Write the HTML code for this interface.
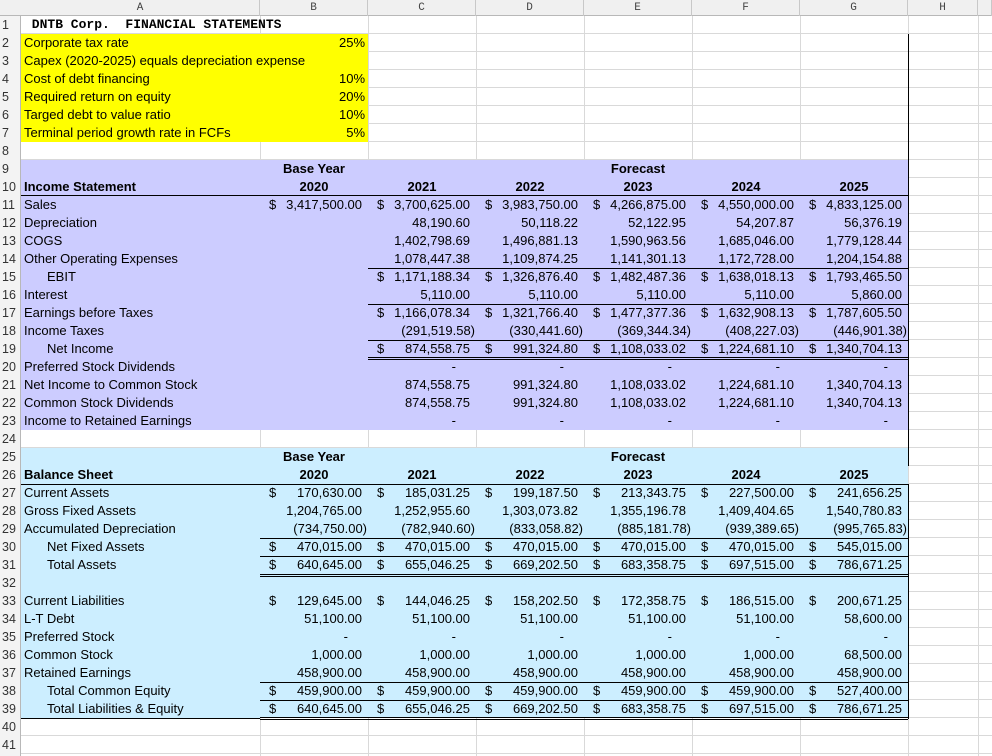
<!DOCTYPE html>
<html><head><meta charset="utf-8"><style>
*{margin:0;padding:0;box-sizing:border-box}
body{width:992px;height:756px;overflow:hidden;background:#fff;position:relative;font-family:"Liberation Sans",Arial,sans-serif;font-size:13px;color:#000}
#grid{position:absolute;left:0;top:0;width:992px;height:756px;
background-image:linear-gradient(to bottom,#d9d9d9 1px,transparent 1px);background-size:100% 18px;background-position:0 15px}
.v{position:absolute;top:0;height:756px;width:1px;background:#d9d9d9}
.f{position:absolute}
#hdr{position:absolute;left:0;top:0;width:992px;height:16px;background:#f0f0f0;border-bottom:1px solid #b8b8b8}
#hdr span{position:absolute;top:0;height:16px;line-height:16px;text-align:center;font-family:"Liberation Mono",monospace;font-size:11px;color:#444;border-right:1px solid #c8c8c8}
#rn{position:absolute;left:0;top:16px;width:21px;height:740px;background:#f3f3f3;border-right:1px solid #b8b8b8}
table{position:absolute;left:0;top:16px;border-collapse:collapse;table-layout:fixed;width:992px}
tr{height:18px}
td{height:18px;line-height:18px;padding:0;white-space:nowrap;overflow:visible;position:relative;vertical-align:middle}
td.h{font-size:12.5px;color:#333;padding-left:2px}
.l{padding-left:3px}
.i{padding-left:26px}
.bd{font-weight:bold}
.c{text-align:center;font-weight:bold}
.n{text-align:right;padding-right:6px}
.g{padding-right:1px}
.z{padding-right:20px}
.p{text-align:right;padding-right:3px}
.s{position:absolute;left:9px;top:0}
.t1{font-family:"Liberation Mono",monospace;font-weight:bold;font-size:13px;white-space:pre}
.ln{position:absolute;height:1px;background:#000}
</style></head><body>
<div id="grid"></div>
<div class="v" style="left:260px"></div><div class="v" style="left:368px"></div><div class="v" style="left:476px"></div><div class="v" style="left:584px"></div><div class="v" style="left:692px"></div><div class="v" style="left:800px"></div><div class="v" style="left:908px"></div><div class="v" style="left:978px"></div>
<div class="f" style="left:21px;top:34px;width:347px;height:108px;background:#ffff00"></div>
<div class="f" style="left:21px;top:160px;width:887px;height:270px;background:#ccccff"></div>
<div class="f" style="left:21px;top:448px;width:887px;height:270px;background:#cceeff"></div>
<div id="hdr">
<span style="left:21px;width:239px">A</span><span style="left:260px;width:108px">B</span><span style="left:368px;width:108px">C</span><span style="left:476px;width:108px">D</span><span style="left:584px;width:108px">E</span><span style="left:692px;width:108px">F</span><span style="left:800px;width:108px">G</span><span style="left:908px;width:70px">H</span><span style="left:978px;width:14px"></span>
</div>
<div id="rn"></div>
<div class="ln" style="left:908px;top:34px;width:1px;height:432px"></div>
<div class="ln" style="left:908px;top:484px;width:1px;height:235px"></div>
<div class="ln" style="left:21px;top:195px;width:887px"></div>
<div class="ln" style="left:368px;top:268px;width:540px"></div>
<div class="ln" style="left:368px;top:304px;width:540px"></div>
<div class="ln" style="left:368px;top:340px;width:540px"></div>
<div class="ln" style="left:368px;top:357px;width:540px"></div>
<div class="ln" style="left:368px;top:359px;width:540px"></div>
<div class="ln" style="left:21px;top:484px;width:887px"></div>
<div class="ln" style="left:260px;top:538px;width:648px"></div>
<div class="ln" style="left:260px;top:556px;width:648px"></div>
<div class="ln" style="left:260px;top:574px;width:648px"></div>
<div class="ln" style="left:260px;top:576px;width:648px"></div>
<div class="ln" style="left:260px;top:682px;width:648px"></div>
<div class="ln" style="left:260px;top:700px;width:648px"></div>
<div class="ln" style="left:260px;top:717px;width:648px"></div>
<div class="ln" style="left:260px;top:719px;width:648px"></div>
<div class="ln" style="left:21px;top:718px;width:239px"></div>
<table>
<colgroup><col style="width:21px"><col style="width:239px"><col style="width:108px"><col style="width:108px"><col style="width:108px"><col style="width:108px"><col style="width:108px"><col style="width:108px"><col style="width:70px"><col style="width:14px"></colgroup>
<tr><td class="h">1</td><td class="l t1" colspan="2"> DNTB Corp.  FINANCIAL STATEMENTS</td><td></td><td></td><td></td><td></td><td></td><td></td><td></td></tr>
<tr><td class="h">2</td><td class="l">Corporate tax rate</td><td class="p">25%</td><td></td><td></td><td></td><td></td><td></td><td></td><td></td></tr>
<tr><td class="h">3</td><td class="l">Capex (2020-2025) equals depreciation expense</td><td></td><td></td><td></td><td></td><td></td><td></td><td></td><td></td></tr>
<tr><td class="h">4</td><td class="l">Cost of debt financing</td><td class="p">10%</td><td></td><td></td><td></td><td></td><td></td><td></td><td></td></tr>
<tr><td class="h">5</td><td class="l">Required return on equity</td><td class="p">20%</td><td></td><td></td><td></td><td></td><td></td><td></td><td></td></tr>
<tr><td class="h">6</td><td class="l">Targed debt to value ratio</td><td class="p">10%</td><td></td><td></td><td></td><td></td><td></td><td></td><td></td></tr>
<tr><td class="h">7</td><td class="l">Terminal period growth rate in FCFs</td><td class="p">5%</td><td></td><td></td><td></td><td></td><td></td><td></td><td></td></tr>
<tr><td class="h">8</td><td></td><td></td><td></td><td></td><td></td><td></td><td></td><td></td><td></td></tr>
<tr><td class="h">9</td><td></td><td class="c">Base Year</td><td></td><td></td><td class="c">Forecast</td><td></td><td></td><td></td><td></td></tr>
<tr><td class="h">10</td><td class="l bd">Income Statement</td><td class="c">2020</td><td class="c">2021</td><td class="c">2022</td><td class="c">2023</td><td class="c">2024</td><td class="c">2025</td><td></td><td></td></tr>
<tr><td class="h">11</td><td class="l">Sales</td><td class="n"><span class="s">$</span>3,417,500.00</td><td class="n"><span class="s">$</span>3,700,625.00</td><td class="n"><span class="s">$</span>3,983,750.00</td><td class="n"><span class="s">$</span>4,266,875.00</td><td class="n"><span class="s">$</span>4,550,000.00</td><td class="n"><span class="s">$</span>4,833,125.00</td><td></td><td></td></tr>
<tr><td class="h">12</td><td class="l">Depreciation</td><td></td><td class="n">48,190.60</td><td class="n">50,118.22</td><td class="n">52,122.95</td><td class="n">54,207.87</td><td class="n">56,376.19</td><td></td><td></td></tr>
<tr><td class="h">13</td><td class="l">COGS</td><td></td><td class="n">1,402,798.69</td><td class="n">1,496,881.13</td><td class="n">1,590,963.56</td><td class="n">1,685,046.00</td><td class="n">1,779,128.44</td><td></td><td></td></tr>
<tr><td class="h">14</td><td class="l">Other Operating Expenses</td><td></td><td class="n">1,078,447.38</td><td class="n">1,109,874.25</td><td class="n">1,141,301.13</td><td class="n">1,172,728.00</td><td class="n">1,204,154.88</td><td></td><td></td></tr>
<tr><td class="h">15</td><td class="i">EBIT</td><td></td><td class="n"><span class="s">$</span>1,171,188.34</td><td class="n"><span class="s">$</span>1,326,876.40</td><td class="n"><span class="s">$</span>1,482,487.36</td><td class="n"><span class="s">$</span>1,638,018.13</td><td class="n"><span class="s">$</span>1,793,465.50</td><td></td><td></td></tr>
<tr><td class="h">16</td><td class="l">Interest</td><td></td><td class="n">5,110.00</td><td class="n">5,110.00</td><td class="n">5,110.00</td><td class="n">5,110.00</td><td class="n">5,860.00</td><td></td><td></td></tr>
<tr><td class="h">17</td><td class="l">Earnings before Taxes</td><td></td><td class="n"><span class="s">$</span>1,166,078.34</td><td class="n"><span class="s">$</span>1,321,766.40</td><td class="n"><span class="s">$</span>1,477,377.36</td><td class="n"><span class="s">$</span>1,632,908.13</td><td class="n"><span class="s">$</span>1,787,605.50</td><td></td><td></td></tr>
<tr><td class="h">18</td><td class="l">Income Taxes</td><td></td><td class="n g">(291,519.58)</td><td class="n g">(330,441.60)</td><td class="n g">(369,344.34)</td><td class="n g">(408,227.03)</td><td class="n g">(446,901.38)</td><td></td><td></td></tr>
<tr><td class="h">19</td><td class="i">Net Income</td><td></td><td class="n"><span class="s">$</span>874,558.75</td><td class="n"><span class="s">$</span>991,324.80</td><td class="n"><span class="s">$</span>1,108,033.02</td><td class="n"><span class="s">$</span>1,224,681.10</td><td class="n"><span class="s">$</span>1,340,704.13</td><td></td><td></td></tr>
<tr><td class="h">20</td><td class="l">Preferred Stock Dividends</td><td></td><td class="n z">-</td><td class="n z">-</td><td class="n z">-</td><td class="n z">-</td><td class="n z">-</td><td></td><td></td></tr>
<tr><td class="h">21</td><td class="l">Net Income to Common Stock</td><td></td><td class="n">874,558.75</td><td class="n">991,324.80</td><td class="n">1,108,033.02</td><td class="n">1,224,681.10</td><td class="n">1,340,704.13</td><td></td><td></td></tr>
<tr><td class="h">22</td><td class="l">Common Stock Dividends</td><td></td><td class="n">874,558.75</td><td class="n">991,324.80</td><td class="n">1,108,033.02</td><td class="n">1,224,681.10</td><td class="n">1,340,704.13</td><td></td><td></td></tr>
<tr><td class="h">23</td><td class="l">Income to Retained Earnings</td><td></td><td class="n z">-</td><td class="n z">-</td><td class="n z">-</td><td class="n z">-</td><td class="n z">-</td><td></td><td></td></tr>
<tr><td class="h">24</td><td></td><td></td><td></td><td></td><td></td><td></td><td></td><td></td><td></td></tr>
<tr><td class="h">25</td><td></td><td class="c">Base Year</td><td></td><td></td><td class="c">Forecast</td><td></td><td></td><td></td><td></td></tr>
<tr><td class="h">26</td><td class="l bd">Balance Sheet</td><td class="c">2020</td><td class="c">2021</td><td class="c">2022</td><td class="c">2023</td><td class="c">2024</td><td class="c">2025</td><td></td><td></td></tr>
<tr><td class="h">27</td><td class="l">Current Assets</td><td class="n"><span class="s">$</span>170,630.00</td><td class="n"><span class="s">$</span>185,031.25</td><td class="n"><span class="s">$</span>199,187.50</td><td class="n"><span class="s">$</span>213,343.75</td><td class="n"><span class="s">$</span>227,500.00</td><td class="n"><span class="s">$</span>241,656.25</td><td></td><td></td></tr>
<tr><td class="h">28</td><td class="l">Gross Fixed Assets</td><td class="n">1,204,765.00</td><td class="n">1,252,955.60</td><td class="n">1,303,073.82</td><td class="n">1,355,196.78</td><td class="n">1,409,404.65</td><td class="n">1,540,780.83</td><td></td><td></td></tr>
<tr><td class="h">29</td><td class="l">Accumulated Depreciation</td><td class="n g">(734,750.00)</td><td class="n g">(782,940.60)</td><td class="n g">(833,058.82)</td><td class="n g">(885,181.78)</td><td class="n g">(939,389.65)</td><td class="n g">(995,765.83)</td><td></td><td></td></tr>
<tr><td class="h">30</td><td class="i">Net Fixed Assets</td><td class="n"><span class="s">$</span>470,015.00</td><td class="n"><span class="s">$</span>470,015.00</td><td class="n"><span class="s">$</span>470,015.00</td><td class="n"><span class="s">$</span>470,015.00</td><td class="n"><span class="s">$</span>470,015.00</td><td class="n"><span class="s">$</span>545,015.00</td><td></td><td></td></tr>
<tr><td class="h">31</td><td class="i">Total Assets</td><td class="n"><span class="s">$</span>640,645.00</td><td class="n"><span class="s">$</span>655,046.25</td><td class="n"><span class="s">$</span>669,202.50</td><td class="n"><span class="s">$</span>683,358.75</td><td class="n"><span class="s">$</span>697,515.00</td><td class="n"><span class="s">$</span>786,671.25</td><td></td><td></td></tr>
<tr><td class="h">32</td><td></td><td></td><td></td><td></td><td></td><td></td><td></td><td></td><td></td></tr>
<tr><td class="h">33</td><td class="l">Current Liabilities</td><td class="n"><span class="s">$</span>129,645.00</td><td class="n"><span class="s">$</span>144,046.25</td><td class="n"><span class="s">$</span>158,202.50</td><td class="n"><span class="s">$</span>172,358.75</td><td class="n"><span class="s">$</span>186,515.00</td><td class="n"><span class="s">$</span>200,671.25</td><td></td><td></td></tr>
<tr><td class="h">34</td><td class="l">L-T Debt</td><td class="n">51,100.00</td><td class="n">51,100.00</td><td class="n">51,100.00</td><td class="n">51,100.00</td><td class="n">51,100.00</td><td class="n">58,600.00</td><td></td><td></td></tr>
<tr><td class="h">35</td><td class="l">Preferred Stock</td><td class="n z">-</td><td class="n z">-</td><td class="n z">-</td><td class="n z">-</td><td class="n z">-</td><td class="n z">-</td><td></td><td></td></tr>
<tr><td class="h">36</td><td class="l">Common Stock</td><td class="n">1,000.00</td><td class="n">1,000.00</td><td class="n">1,000.00</td><td class="n">1,000.00</td><td class="n">1,000.00</td><td class="n">68,500.00</td><td></td><td></td></tr>
<tr><td class="h">37</td><td class="l">Retained Earnings</td><td class="n">458,900.00</td><td class="n">458,900.00</td><td class="n">458,900.00</td><td class="n">458,900.00</td><td class="n">458,900.00</td><td class="n">458,900.00</td><td></td><td></td></tr>
<tr><td class="h">38</td><td class="i">Total Common Equity</td><td class="n"><span class="s">$</span>459,900.00</td><td class="n"><span class="s">$</span>459,900.00</td><td class="n"><span class="s">$</span>459,900.00</td><td class="n"><span class="s">$</span>459,900.00</td><td class="n"><span class="s">$</span>459,900.00</td><td class="n"><span class="s">$</span>527,400.00</td><td></td><td></td></tr>
<tr><td class="h">39</td><td class="i">Total Liabilities &amp; Equity</td><td class="n"><span class="s">$</span>640,645.00</td><td class="n"><span class="s">$</span>655,046.25</td><td class="n"><span class="s">$</span>669,202.50</td><td class="n"><span class="s">$</span>683,358.75</td><td class="n"><span class="s">$</span>697,515.00</td><td class="n"><span class="s">$</span>786,671.25</td><td></td><td></td></tr>
<tr><td class="h">40</td><td></td><td></td><td></td><td></td><td></td><td></td><td></td><td></td><td></td></tr>
<tr><td class="h">41</td><td></td><td></td><td></td><td></td><td></td><td></td><td></td><td></td><td></td></tr>
</table>
</body></html>
